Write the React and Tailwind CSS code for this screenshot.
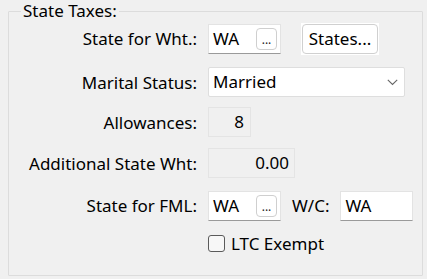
export default function App() {
  const font = { fontFamily: '"Noto Sans", "Open Sans", sans-serif' };
  const Label = ({ children }) => (
    <div className="w-[188px] shrink-0 text-right leading-none">{children}</div>
  );
  const Ellipsis = () => (
    <div className="w-[21px] h-[22px] rounded-[4px] border border-[#cfcfcf] bg-white flex items-end justify-center pb-[3px] text-[12px] leading-none text-[#222]">
      ...
    </div>
  );
  const StateField = () => (
    <div className="w-[73px] h-[30px] bg-white border border-[#e3e3e3] border-b-[#9a9a9a] flex items-center justify-between pl-[4px] pr-[3px]">
      <span>WA</span>
      <Ellipsis />
    </div>
  );
  return (
    <div className="w-[427px] h-[279px] bg-[#f0f0f0] text-[17px] text-black pt-[1px]" style={font}>
      <fieldset className="ml-[8px] w-[415px] h-[275px] border border-[#dcdcdc] rounded-[1px]">
        <legend className="ml-[12px] px-[2px] leading-[20px]">State Taxes:</legend>
        <div className="flex flex-col">
          <div className="flex items-center h-[31px] mt-[2px]">
            <Label>State for Wht.:</Label>
            <div className="ml-[11px]"><StateField /></div>
            <div className="ml-[20px] bg-white p-[1px]">
              <div className="w-[76px] h-[30px] rounded-[4px] border border-[#d0d0d0] bg-white flex items-center justify-center">
                States...
              </div>
            </div>
          </div>
          <div className="flex items-center h-[30px] mt-[13px]">
            <Label>Marital Status:</Label>
            <div className="ml-[11px] w-[197px] h-[30px] bg-white border border-[#dedede] rounded-[2px] flex items-center justify-between pl-[4px] pr-[6px]">
              <span>Married</span>
              <svg width="11" height="7" viewBox="0 0 11 7" fill="none">
                <path d="M0.8 0.8 L5.5 5.5 L10.2 0.8" stroke="#666" strokeWidth="1.1" />
              </svg>
            </div>
          </div>
          <div className="flex items-center h-[30px] mt-[10px]">
            <Label>Allowances:</Label>
            <div className="ml-[11px] w-[43px] h-[30px] bg-[#f0f0f0] border border-[#e4e4e4] flex items-center justify-end pr-[6px]">
              8
            </div>
          </div>
          <div className="flex items-center h-[30px] mt-[11px]">
            <Label>Additional State Wht:</Label>
            <div className="ml-[11px] w-[87px] h-[30px] bg-[#f0f0f0] border border-[#e4e4e4] flex items-center justify-end pr-[5px]">
              0.00
            </div>
          </div>
          <div className="flex items-center h-[31px] mt-[12px]">
            <Label>State for FML:</Label>
            <div className="ml-[11px]"><StateField /></div>
            <div className="ml-[11px] leading-none">W/C:</div>
            <div className="ml-[11px] w-[73px] h-[30px] bg-white border border-[#e3e3e3] border-b-[#9a9a9a] flex items-center pl-[4px]">
              WA
            </div>
          </div>
          <div className="flex items-center h-[18px] mt-[13px] ml-[199px]">
            <div className="w-[17px] h-[17px] rounded-[3px] border border-[#5a5a5a] bg-[#f7f7f7]" />
            <span className="ml-[6px] leading-none">LTC Exempt</span>
          </div>
        </div>
      </fieldset>
    </div>
  );
}
